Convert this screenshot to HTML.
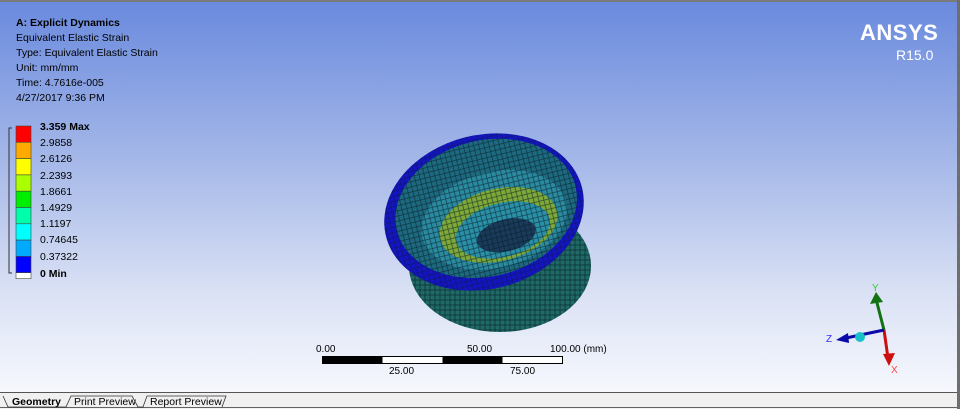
<!DOCTYPE html>
<html><head><meta charset="utf-8"><style>
*{margin:0;padding:0;box-sizing:border-box}
body{width:960px;height:409px;overflow:hidden;position:relative;font-family:"Liberation Sans",sans-serif;background:#fff}
#vp{position:absolute;left:0;top:2px;width:957px;height:391px;background:linear-gradient(#6a8ade 0%,#a4b7e8 40%,#dbe2f5 75%,#f6f8fd 100%)}
#topb{position:absolute;left:0;top:0;width:960px;height:2px;background:#7a7a7a}
#rb{position:absolute;right:0;top:0;width:3px;height:409px;background:#6e6e6e}
.t{position:absolute;font-size:10.5px;color:#000;white-space:nowrap;line-height:12px}
.b{font-weight:bold}
#tabs{position:absolute;left:0;top:392px;width:957px;height:17px;background:#f0f0f0;border-top:1px solid #555}
</style></head><body>
<div id="vp"></div>
<div id="topb"></div>
<div id="rb"></div>
<div class="t b" style="left:16px;top:17px">A: Explicit Dynamics</div>
<div class="t" style="left:16px;top:32px">Equivalent Elastic Strain</div>
<div class="t" style="left:16px;top:47px">Type: Equivalent Elastic Strain</div>
<div class="t" style="left:16px;top:62px">Unit: mm/mm</div>
<div class="t" style="left:16px;top:77px">Time: 4.7616e-005</div>
<div class="t" style="left:16px;top:92px">4/27/2017 9:36 PM</div>
<div style="position:absolute;left:860px;top:20px;color:#fff;font-size:22px;font-weight:bold;letter-spacing:0.5px">ANSYS</div>
<div style="position:absolute;left:896px;top:47px;color:#fff;font-size:14px">R15.0</div>
<svg style="position:absolute;left:0;top:0" width="960" height="409">
<path d="M12 128H9V273H12" fill="none" stroke="#333"/>
<g stroke="#444" stroke-width="0.6">
<rect x="16" y="126" width="15" height="16.3" fill="#ff0000"/>
<rect x="16" y="142.3" width="15" height="16.3" fill="#ffaa00"/>
<rect x="16" y="158.6" width="15" height="16.3" fill="#ffff00"/>
<rect x="16" y="174.9" width="15" height="16.3" fill="#aaff00"/>
<rect x="16" y="191.2" width="15" height="16.3" fill="#00ee00"/>
<rect x="16" y="207.5" width="15" height="16.3" fill="#00ffaa"/>
<rect x="16" y="223.8" width="15" height="16.3" fill="#00ffff"/>
<rect x="16" y="240.1" width="15" height="16.3" fill="#00aaff"/>
<rect x="16" y="256.4" width="15" height="16.3" fill="#0000ff"/>
<rect x="16" y="272.7" width="15" height="6" fill="#fff"/>
</g>
<defs>
<pattern id="m" width="5" height="5" patternUnits="userSpaceOnUse"><rect width="5" height="5" fill="none" stroke="#061c24" stroke-width="0.7"/></pattern>
</defs>
<ellipse cx="500" cy="266" rx="91" ry="66" fill="#1f6a66"/>
<ellipse cx="500" cy="266" rx="91" ry="66" fill="url(#m)" opacity="0.8"/>
<g transform="rotate(-14 484 212)">
<ellipse cx="484" cy="212" rx="101" ry="77" fill="#1414c0"/>
<ellipse cx="484" cy="212" rx="101" ry="77" fill="url(#m)" opacity="0.5"/>
<ellipse cx="487" cy="209" rx="92" ry="68" fill="#1d6a80"/>
<ellipse cx="492" cy="222" rx="74" ry="48" fill="#2a8aa0"/>
<ellipse cx="495" cy="228" rx="60" ry="36" fill="#7ea838"/>
<ellipse cx="498" cy="234" rx="48" ry="27" fill="#2a90a8"/>
<ellipse cx="500" cy="240" rx="30" ry="16" fill="#1a3a5a"/>
<ellipse cx="487" cy="209" rx="92" ry="68" fill="url(#m)" opacity="0.7"/>
</g>
<rect x="322.5" y="356.5" width="240" height="7" fill="#fff" stroke="#000"/>
<rect x="322.5" y="356.5" width="60" height="7" fill="#000"/>
<rect x="442.5" y="356.5" width="60" height="7" fill="#000"/>
<line x1="884" y1="330" x2="876" y2="299" stroke="#137313" stroke-width="3"/>
<polygon points="876,292 870,304 883,302" fill="#137313"/>
<line x1="884" y1="330" x2="888" y2="358" stroke="#cc1010" stroke-width="3"/>
<polygon points="889,366 883,354 895,353" fill="#cc1010"/>
<line x1="884" y1="330" x2="846" y2="338" stroke="#0a0aa8" stroke-width="3"/>
<polygon points="836,340 848,333 849,343" fill="#0a0aa8"/>
<circle cx="860" cy="337" r="5" fill="#18c0c8"/>
<text x="872" y="291" font-size="10" fill="#3c3" font-family="Liberation Sans">Y</text>
<text x="891" y="373" font-size="10" fill="#f44" font-family="Liberation Sans">X</text>
<text x="826" y="342" font-size="10" fill="#33f" font-family="Liberation Sans">Z</text>
</svg>
<div class="t b" style="left:40px;top:121px">3.359 Max</div>
<div class="t" style="left:40px;top:137px">2.9858</div>
<div class="t" style="left:40px;top:153px">2.6126</div>
<div class="t" style="left:40px;top:170px">2.2393</div>
<div class="t" style="left:40px;top:186px">1.8661</div>
<div class="t" style="left:40px;top:202px">1.4929</div>
<div class="t" style="left:40px;top:218px">1.1197</div>
<div class="t" style="left:40px;top:234px">0.74645</div>
<div class="t" style="left:40px;top:251px">0.37322</div>
<div class="t b" style="left:40px;top:268px">0 Min</div>
<div class="t" style="left:316px;top:344px;font-size:10px">0.00</div>
<div class="t" style="left:467px;top:344px;font-size:10px">50.00</div>
<div class="t" style="left:550px;top:344px;font-size:10px">100.00 (mm)</div>
<div class="t" style="left:389px;top:366px;font-size:10px">25.00</div>
<div class="t" style="left:510px;top:366px;font-size:10px">75.00</div>
<div id="tabs"></div>
<div class="t b" style="left:12px;top:396px">Geometry</div>
<div class="t" style="left:74px;top:396px">Print Preview</div>
<div class="t" style="left:150px;top:396px">Report Preview</div>
<svg style="position:absolute;left:0;top:392px" width="960" height="17"><path d="M3 4L8 15H66L71 4H132L138 15H143L147 4H226L222 15M0 15.5H957" fill="none" stroke="#333" stroke-width="0.8"/></svg>
</body></html>
